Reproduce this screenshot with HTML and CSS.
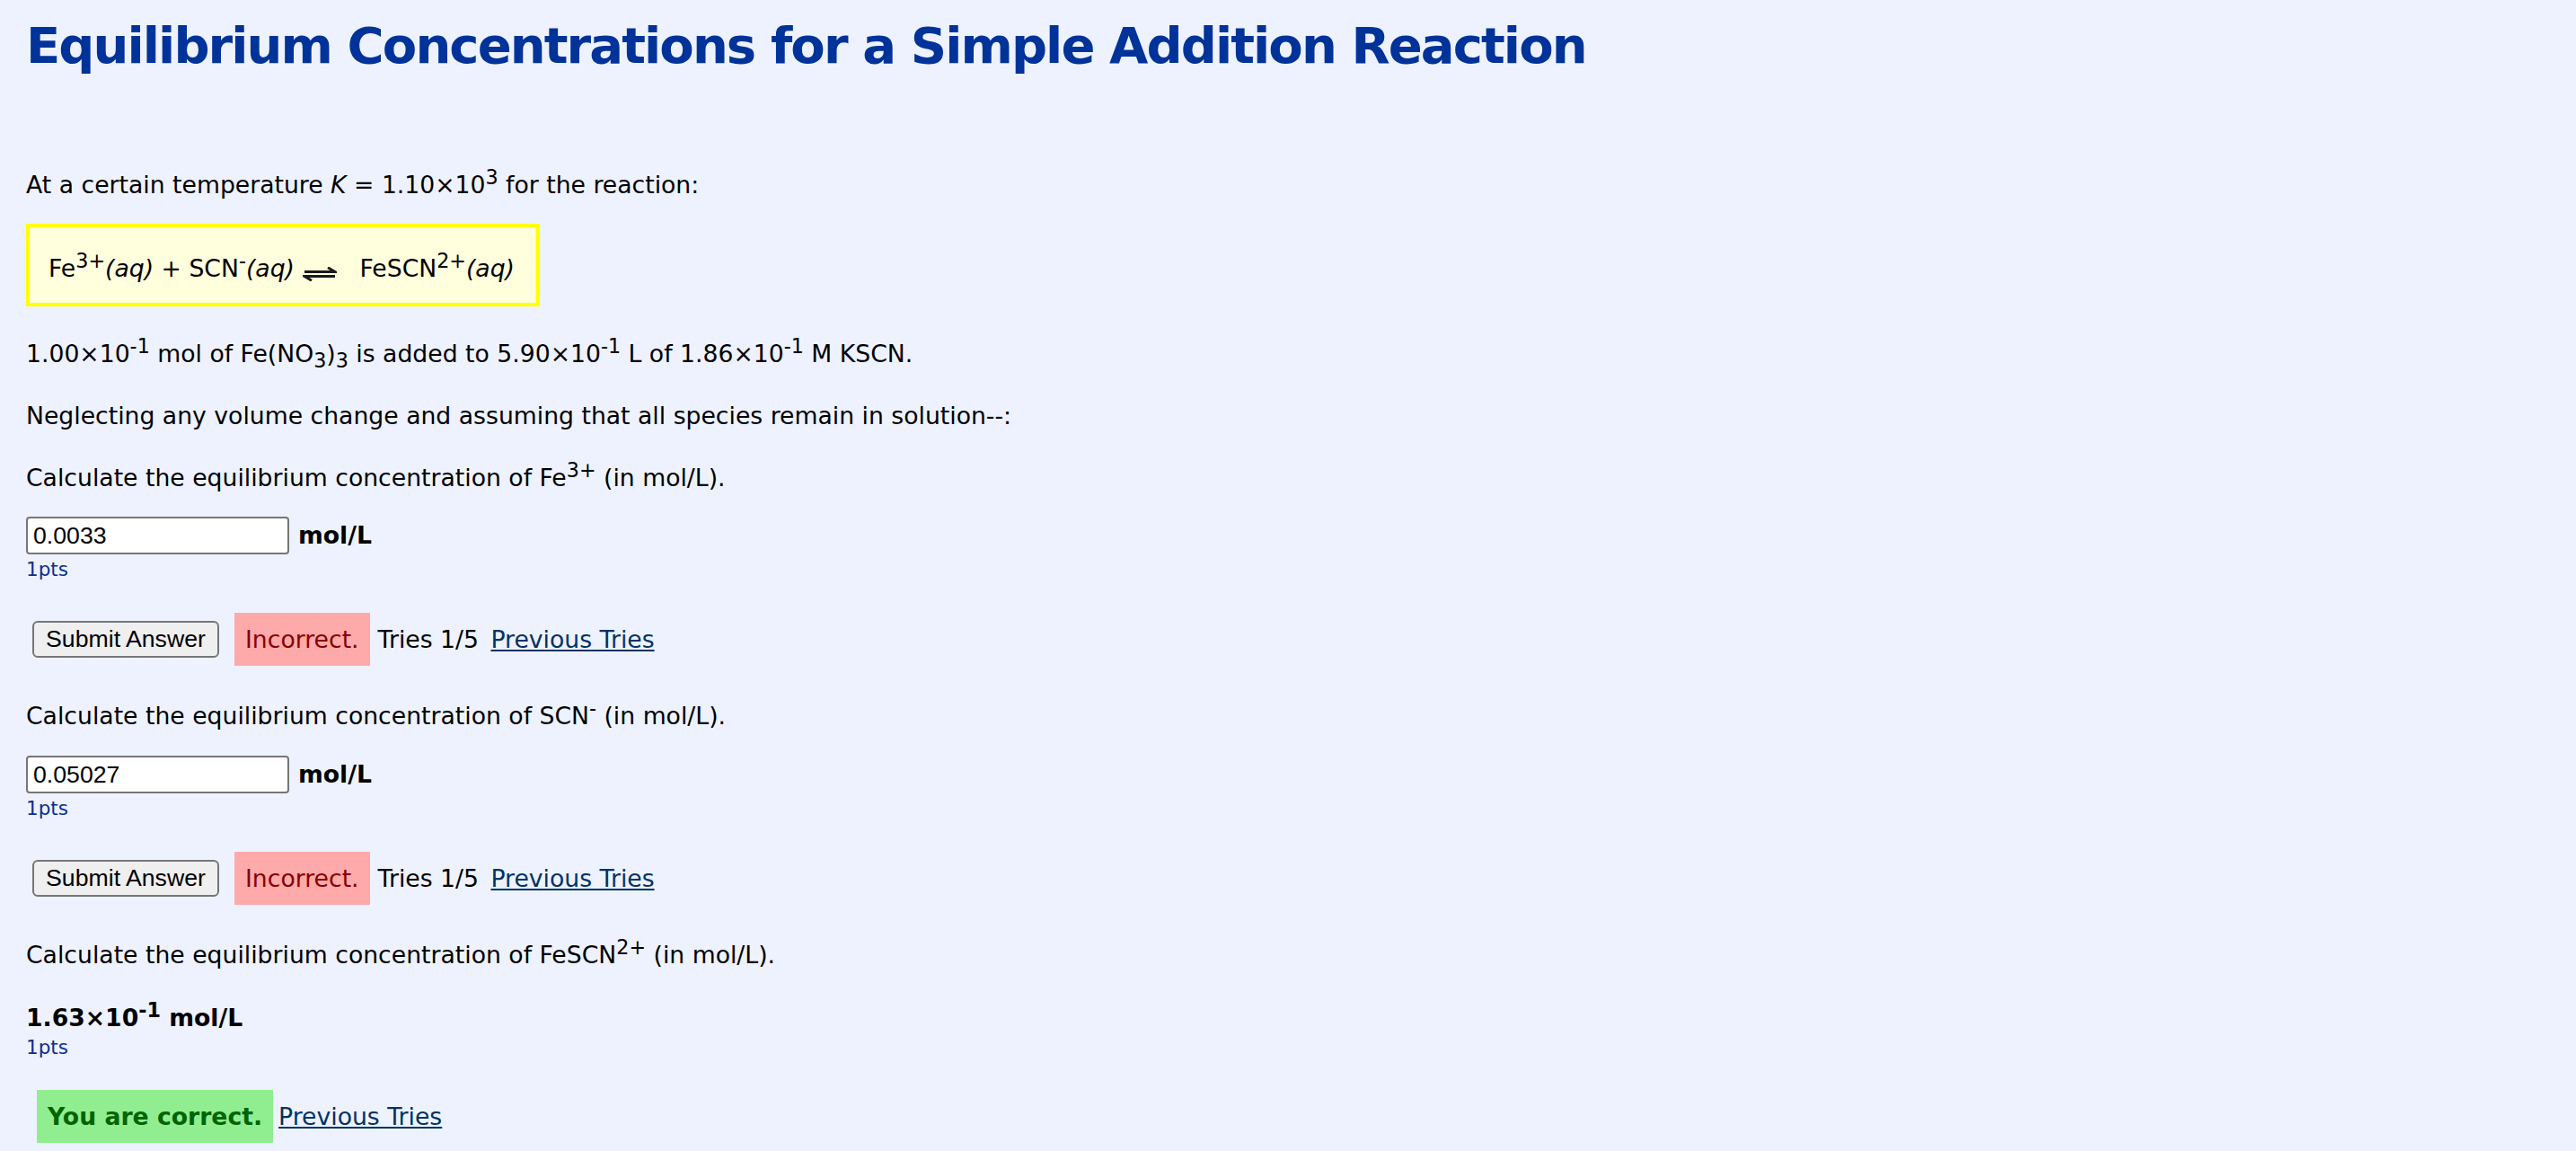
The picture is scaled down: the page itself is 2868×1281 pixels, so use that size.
FILE: index.html
```html
<!DOCTYPE html>
<html lang="en">
<head>
<meta charset="utf-8">
<title>Equilibrium Concentrations for a Simple Addition Reaction</title>
<link rel="stylesheet" href="styles.css">
</head>
<body>
<h1 class="title">Equilibrium Concentrations for a Simple Addition Reaction</h1>

<p class="line intro">At a certain temperature <i>K</i> = 1.10×10<sup>3</sup> for the reaction:</p>

<div class="reaction">Fe<sup>3+</sup><i>(aq)</i> + SCN<sup>-</sup><i>(aq)</i><svg class="eq-arrow" width="38" height="16" viewBox="0 0 38 16" aria-hidden="true"><path d="M2 5.5H36L28 0.8" fill="none" stroke="#1a1a1a" stroke-width="3" stroke-linejoin="miter"/><path d="M36 10.5H2L10 15.2" fill="none" stroke="#1a1a1a" stroke-width="3" stroke-linejoin="miter"/></svg> FeSCN<sup>2+</sup><i>(aq)</i></div>

<p class="line after-box">1.00×10<sup>-1</sup> mol of Fe(NO<sub>3</sub>)<sub>3</sub> is added to 5.90×10<sup>-1</sup> L of 1.86×10<sup>-1</sup> M KSCN.</p>

<p class="line gap">Neglecting any volume change and assuming that all species remain in solution--:</p>

<p class="line gap">Calculate the equilibrium concentration of Fe<sup>3+</sup> (in mol/L).</p>

<div class="answer-row q1">
  <input class="answer-input" type="text" value="0.0033">
  <span class="unit">mol/L</span>
</div>
<div class="pts">1pts</div>

<div class="status-row">
  <button class="submit" type="button">Submit Answer</button>
  <span class="incorrect">Incorrect.</span>
  <span class="tries">Tries 1/5 <a href="#" class="prev prev-tries">Previous Tries</a></span>
</div>

<p class="line q-next">Calculate the equilibrium concentration of SCN<sup>-</sup> (in mol/L).</p>

<div class="answer-row q2">
  <input class="answer-input" type="text" value="0.05027">
  <span class="unit">mol/L</span>
</div>
<div class="pts">1pts</div>

<div class="status-row">
  <button class="submit" type="button">Submit Answer</button>
  <span class="incorrect">Incorrect.</span>
  <span class="tries">Tries 1/5 <a href="#" class="prev prev-tries">Previous Tries</a></span>
</div>

<p class="line q-next">Calculate the equilibrium concentration of FeSCN<sup>2+</sup> (in mol/L).</p>

<p class="line final"><b>1.63×10<sup>-1</sup> mol/L</b></p>
<div class="pts pts-final">1pts</div>

<div class="correct-row">
  <span class="correct">You are correct.</span>
  <a href="#" class="prev">Previous Tries</a>
</div>
</body>
</html>
```

FILE: styles.css
```css
html {
  background: #eef2fe;
}

body {
  margin: 0;
  padding: 19px 29px 20px 29px;
  background: #eef2fe;
  color: #000000;
  font-family: "DejaVu Sans", Verdana, sans-serif;
  font-size: 26.67px;
  line-height: 32px;
}

sup, sub {
  line-height: 0;
}

.title {
  margin: 0;
  font-size: 56px;
  line-height: 64px;
  font-weight: bold;
  letter-spacing: -1.9px;
  color: #003399;
}

.line {
  margin: 0;
}

.intro {
  margin-top: 107px;
}

.reaction {
  display: inline-block;
  margin-top: 27px;
  padding: 30px 24px 22px 21px;
  background: #ffffdd;
  border: 4px solid #ffff00;
}

.eq-arrow {
  vertical-align: -5px;
  margin: 0 17px 0 9px;
}

.after-box {
  margin-top: 37px;
}

.gap {
  margin-top: 37px;
}

.answer-row {
  display: flex;
  align-items: center;
  gap: 10px;
}

.q1 {
  margin-top: 27px;
}

.q2 {
  margin-top: 28px;
}

.answer-input {
  box-sizing: border-box;
  width: 293px;
  height: 42px;
  margin: 0;
  padding: 0 6px;
  border: 2px solid #767676;
  border-radius: 4px;
  background: #ffffff;
  color: #000000;
  font-family: "Liberation Sans", Arial, sans-serif;
  font-size: 26.67px;
}

.unit {
  font-weight: bold;
}

.pts {
  margin-top: 5px;
  font-size: 21.5px;
  line-height: 24px;
  color: #0b2e91;
}

.status-row {
  display: flex;
  align-items: center;
  margin-top: 36px;
  padding-left: 7px;
}

.submit {
  box-sizing: border-box;
  width: 208px;
  height: 41px;
  margin: 0 17px 0 0;
  padding: 0;
  border: 2px solid #767676;
  border-radius: 6px;
  background: #efefef;
  color: #000000;
  font-family: "Liberation Sans", Arial, sans-serif;
  font-size: 26.67px;
}

.incorrect {
  padding: 13.5px 12px;
  background: #ffaaaa;
  color: #880000;
  margin-right: 9px;
}

.prev {
  color: #003366;
  text-decoration: underline;
}

.prev-tries {
  margin-left: 5px;
}

.q-next {
  margin-top: 40px;
}

.final {
  margin-top: 38px;
}

.pts-final {
  margin-top: 5px;
}

.correct-row {
  display: flex;
  align-items: center;
  gap: 6px;
  margin-top: 35px;
  padding-left: 12px;
}

.correct {
  padding: 14px 12px 13px 12px;
  background: #90ee90;
  color: #006400;
  font-weight: bold;
}
```
